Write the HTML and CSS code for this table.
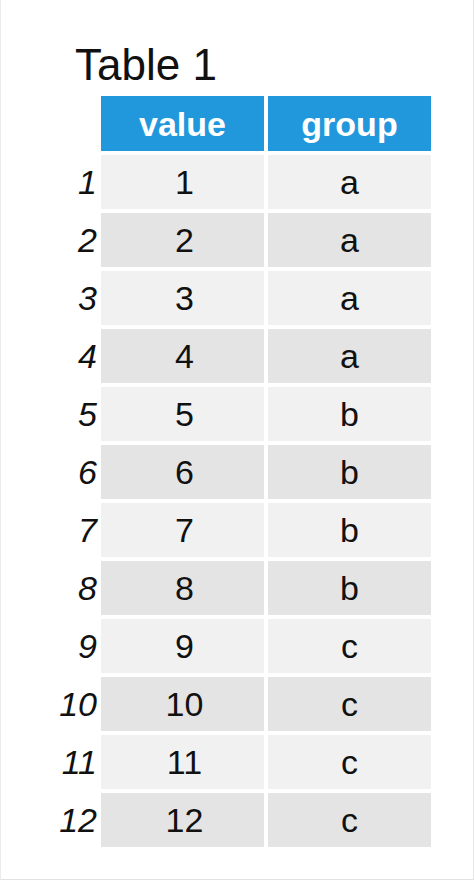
FILE: index.html
```html
<!DOCTYPE html>
<html>
<head>
<meta charset="utf-8">
<link rel="stylesheet" href="styles.css">
</head>
<body>
<div class="frame">
  <div class="title">Table 1</div>
  <div class="table">
    <div class="rn"></div><div class="th">value</div><div class="th">group</div>
    <div class="rn">1</div><div class="td num odd">1</div><div class="td odd">a</div>
    <div class="rn">2</div><div class="td num even">2</div><div class="td even">a</div>
    <div class="rn">3</div><div class="td num odd">3</div><div class="td odd">a</div>
    <div class="rn">4</div><div class="td num even">4</div><div class="td even">a</div>
    <div class="rn">5</div><div class="td num odd">5</div><div class="td odd">b</div>
    <div class="rn">6</div><div class="td num even">6</div><div class="td even">b</div>
    <div class="rn">7</div><div class="td num odd">7</div><div class="td odd">b</div>
    <div class="rn">8</div><div class="td num even">8</div><div class="td even">b</div>
    <div class="rn">9</div><div class="td num odd">9</div><div class="td odd">c</div>
    <div class="rn">10</div><div class="td num even">10</div><div class="td even">c</div>
    <div class="rn">11</div><div class="td num odd">11</div><div class="td odd">c</div>
    <div class="rn">12</div><div class="td num even">12</div><div class="td even">c</div>
  </div>
</div>
</body>
</html>
```
FILE: styles.css
```css
html, body {
  margin: 0;
  padding: 0;
  background: #ffffff;
}
body {
  font-family: "Liberation Sans", Arial, sans-serif;
  color: #111111;
}
.frame {
  width: 474px;
  height: 880px;
  box-sizing: border-box;
  border-left: 1px solid #ececec;
  border-right: 1px solid #e6e6e6;
  border-bottom: 1px solid #e2e2e2;
  overflow: hidden;
}
.title {
  margin-top: 43px;
  padding-left: 74px;
  font-size: 44px;
  line-height: 44px;
  height: 44px;
}
.table {
  margin-top: 9px;
  margin-left: -1px;
  display: grid;
  grid-template-columns: 97px 163px 163px;
  grid-template-rows: 55px;
  grid-auto-rows: 54px;
  column-gap: 4px;
  row-gap: 4px;
}
.th, .td, .rn {
  display: flex;
  align-items: center;
  font-size: 34px;
  line-height: 34px;
}
.th, .td {
  justify-content: center;
}
.th {
  background: #2298dc;
  color: #ffffff;
  font-weight: bold;
}
.num {
  padding-left: 4px;
}
.rn {
  justify-content: flex-end;
  font-style: italic;
  padding-right: 0;
}
.odd {
  background: #f1f1f1;
}
.even {
  background: #e4e4e4;
}
```
